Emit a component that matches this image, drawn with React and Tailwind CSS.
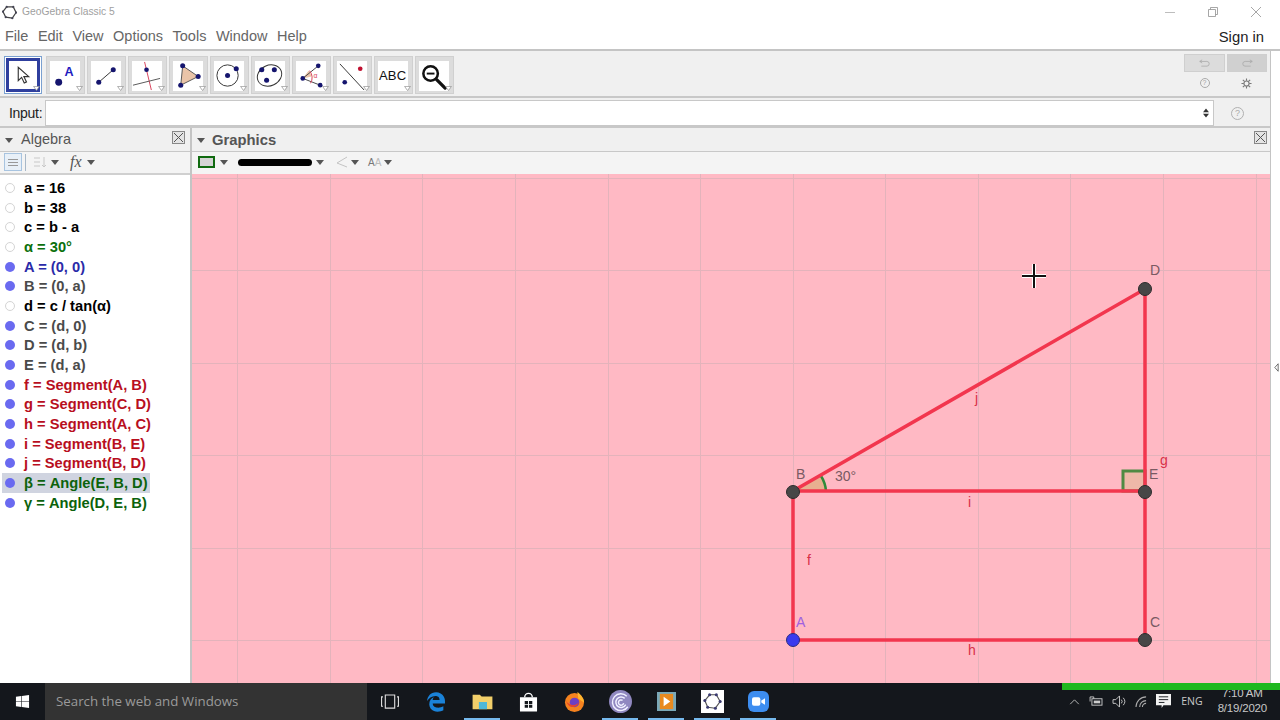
import { FaEdgeLegacy, FaWindows } from "react-icons/fa6";

const dot = "#15156e";

const tools = [
  <>
    <circle cx="9" cy="22" r="3.6" fill={dot} />
    <text x="15" y="15" fontSize="13" fontWeight="700" fill="#1c1cc0" fontFamily="Liberation Sans">A</text>
  </>,
  <>
    <line x1="8" y1="22" x2="23" y2="9" stroke="#333" strokeWidth="1" />
    <circle cx="8" cy="22" r="2.6" fill={dot} />
    <circle cx="23" cy="9" r="2.6" fill={dot} />
  </>,
  <>
    <line x1="13" y1="1" x2="20" y2="30" stroke="#d8405a" strokeWidth="1" />
    <line x1="1" y1="25" x2="29" y2="18" stroke="#555" strokeWidth="1" />
    <circle cx="15" cy="9" r="2.4" fill={dot} />
  </>,
  <>
    <polygon points="10,5 26,16 8,25" fill="#eac4a8" stroke="#555" strokeWidth="1" />
    <circle cx="10" cy="5" r="2.6" fill={dot} />
    <circle cx="26" cy="16" r="2.6" fill={dot} />
    <circle cx="8" cy="25" r="2.6" fill={dot} />
  </>,
  <>
    <circle cx="14" cy="15" r="11" fill="none" stroke="#333" strokeWidth="1" />
    <circle cx="14" cy="15" r="2.6" fill={dot} />
    <circle cx="23" cy="8" r="2.6" fill={dot} />
  </>,
  <>
    <ellipse cx="15" cy="15" rx="13" ry="10.5" fill="none" stroke="#333" strokeWidth="1" transform="rotate(-25 15 15)" />
    <circle cx="7" cy="9" r="2.6" fill={dot} />
    <circle cx="20" cy="9" r="2.6" fill={dot} />
    <circle cx="12" cy="20" r="2.6" fill={dot} />
  </>,
  <>
    <path d="M7 18 L16 16 A9 9 0 0 0 13 10 Z" fill="#eac4a8" />
    <path d="M23 5 L7 18 L25 25" fill="none" stroke="#444" strokeWidth="1" />
    <path d="M14 10 A11 11 0 0 1 15 23" fill="none" stroke="#d8405a" strokeWidth="1" />
    <circle cx="23" cy="5" r="2.4" fill={dot} />
    <circle cx="7" cy="18" r="2.4" fill={dot} />
    <circle cx="25" cy="25" r="2.4" fill={dot} />
    <text x="18" y="18" fontSize="7" fill="#d8405a" fontFamily="Liberation Sans">α</text>
  </>,
  <>
    <line x1="3" y1="3" x2="28" y2="30" stroke="#333" strokeWidth="1" />
    <circle cx="8" cy="22" r="2.4" fill={dot} />
    <circle cx="24" cy="8" r="2.4" fill="#c01030" />
  </>,
  <text x="1" y="20" fontSize="13.5" fill="#111" fontFamily="Liberation Sans" textLength="28">ABC</text>,
  <>
    <circle cx="12" cy="13" r="7.5" fill="none" stroke="#111" strokeWidth="2.6" />
    <line x1="8" y1="13" x2="16" y2="13" stroke="#111" strokeWidth="2" />
    <line x1="18" y1="19" x2="27" y2="28" stroke="#111" strokeWidth="3.4" strokeLinecap="round" />
  </>,
];

const rows = [
  ["a = 16", "text-black", false],
  ["b = 38", "text-black", false],
  ["c = b - a", "text-black", false],
  ["α = 30°", "text-[#0c700c]", false],
  ["A = (0, 0)", "text-[#2a2aa8]", true],
  ["B = (0, a)", "text-[#4a4a4a]", true],
  ["d = c / tan(α)", "text-black", false],
  ["C = (d, 0)", "text-[#4a4a4a]", true],
  ["D = (d, b)", "text-[#4a4a4a]", true],
  ["E = (d, a)", "text-[#4a4a4a]", true],
  ["f = Segment(A, B)", "text-[#b80f1e]", true],
  ["g = Segment(C, D)", "text-[#b80f1e]", true],
  ["h = Segment(A, C)", "text-[#b80f1e]", true],
  ["i = Segment(B, E)", "text-[#b80f1e]", true],
  ["j = Segment(B, D)", "text-[#b80f1e]", true],
  ["β = Angle(E, B, D)", "text-[#0c620c]", true],
  ["γ = Angle(D, E, B)", "text-[#0c620c]", true],
];

const Caret = ({ className = "" }) => (
  <span className={`w-0 h-0 border-x-[4px] border-x-transparent border-t-[5px] border-t-[#555] ${className}`} />
);

const CloseBox = () => (
  <div className="w-[13px] h-[13px] mb-[6px] border border-[#888] bg-[#e4e4e4]">
    <svg viewBox="0 0 11 11" className="w-full h-full">
      <path d="M1 1 L10 10 M10 1 L1 10" stroke="#555" strokeWidth="1" />
    </svg>
  </div>
);

const ToolButton = ({ children, first }) => (
  <div
    className={
      first
        ? "relative w-[38px] h-[38px] flex items-center justify-center border border-[#7aa0d0] bg-white mr-[2px]"
        : "relative w-[39px] h-[38px] pt-[4px] pl-[3px] bg-[#dcdcdc] border border-[#d0d0d0]"
    }
  >
    {first ? (
      <div className="w-[34px] h-[34px] border-[3px] border-[#2f3f9e] flex items-center justify-center">
        {children}
      </div>
    ) : (
      <svg viewBox="0 0 31 31" className="w-[30px] h-[30px] bg-white">
        {children}
      </svg>
    )}
    <svg viewBox="0 0 8 6" className="absolute right-[1px] bottom-[2px] w-[7px] h-[5px]">
      <path d="M0.5 0.5 H7.5 L4 5.5 Z" fill="#fff" stroke="#888" strokeWidth="0.8" />
    </svg>
  </div>
);

const Canvas = () => {
  const xs = [237, 330, 422, 515, 608, 700, 793, 885, 978, 1070, 1163, 1256];
  const ys = [178, 270, 363, 455, 548, 640];
  const label = { fontFamily: "Liberation Sans", fontSize: 14 };
  return (
    <svg viewBox="192 174 1078 509" className="w-full h-full block bg-[#ffb9c4]">
      <g shapeRendering="crispEdges">
        {xs.map((x) => (
          <line key={x} x1={x + 0.5} y1="174" x2={x + 0.5} y2="683" stroke="#e3b3bb" strokeWidth="1" />
        ))}
        {ys.map((y) => (
          <line key={y} x1="192" y1={y + 0.5} x2="1270" y2={y + 0.5} stroke="#e3b3bb" strokeWidth="1" />
        ))}
      </g>

      <path d="M793 491 L826 491 A33 33 0 0 0 821 476 Z" fill="#e8b090" />
      <path d="M826 491 A33 33 0 0 0 821 476" fill="none" stroke="#2e8b3a" strokeWidth="2.5" />
      <rect x="1123" y="471" width="22" height="20" fill="#eeb8a8" stroke="#4f8a42" strokeWidth="3" />

      <g stroke="#f2364e" strokeWidth="3.5" strokeLinecap="round">
        <line x1="793" y1="491" x2="793" y2="640" />
        <line x1="793" y1="640" x2="1145" y2="640" />
        <line x1="1145" y1="289" x2="1145" y2="640" />
        <line x1="793" y1="491" x2="1145" y2="491" />
        <line x1="793" y1="491" x2="1145" y2="289" />
      </g>

      <g fill="#474747" stroke="#2c2c2c" strokeWidth="1">
        <circle cx="793" cy="492" r="6.5" />
        <circle cx="1145" cy="492" r="6.5" />
        <circle cx="1145" cy="289" r="6.5" />
        <circle cx="1145" cy="640" r="6.5" />
      </g>
      <circle cx="793" cy="640" r="6.5" fill="#3a3aee" stroke="#2c2c80" strokeWidth="1" />

      <g {...label} fill="#7a5a62">
        <text x="796" y="479">B</text>
        <text x="1150" y="275">D</text>
        <text x="1149" y="479">E</text>
        <text x="1150" y="627">C</text>
        <text x="835" y="481">30°</text>
      </g>
      <text {...label} x="796" y="627" fill="#a060e0">A</text>
      <g {...label} fill="#d83048">
        <text x="1160" y="465">g</text>
        <text x="807" y="565">f</text>
        <text x="968" y="655">h</text>
        <text x="968" y="507">i</text>
        <text x="975" y="403">j</text>
      </g>

      <g>
        <path d="M1034 264 V288 M1022 276 H1046" stroke="#fff" strokeWidth="4" />
        <path d="M1034 264 V288 M1022 276 H1046" stroke="#111" strokeWidth="2" />
      </g>
    </svg>
  );
};

const TaskIcon = ({ children, active }) => (
  <div className="relative w-[46px] h-full flex items-center justify-center">
    {children}
    {active && <span className="absolute bottom-0 left-[5px] right-[5px] h-[2px] bg-[#76b9ed]" />}
  </div>
);

export default function App() {
  return (
    <div className="w-[1280px] h-[720px] overflow-hidden flex flex-col bg-white font-['Liberation_Sans',sans-serif]">
      {/* title bar */}
      <div className="h-[24px] flex items-center bg-white shrink-0">
        <svg viewBox="0 0 16 16" className="w-[15px] h-[15px] ml-[2px]">
          <polygon points="5,2 12,2 15,8 11,14 4,13 1,7" fill="none" stroke="#444" strokeWidth="1.3" />
          <g fill="#445">
            <circle cx="5" cy="2" r="1.2" />
            <circle cx="12" cy="2" r="1.2" />
            <circle cx="15" cy="8" r="1.2" />
            <circle cx="11" cy="14" r="1.2" />
            <circle cx="4" cy="13" r="1.2" />
            <circle cx="1" cy="7" r="1.2" />
          </g>
        </svg>
        <span className="ml-[5px] text-[10.3px] text-[#a0a0a0]">GeoGebra Classic 5</span>
        <div className="ml-auto flex items-center">
          <span className="w-[10px] h-px bg-[#bdbdbd] mr-[33px]" />
          <svg viewBox="0 0 10 10" className="w-[10px] h-[10px] mr-[33px]">
            <path d="M0.5 2.5 H7.5 V9.5 H0.5 Z M2.5 2.5 V0.5 H9.5 V7.5 H7.5" fill="none" stroke="#909090" strokeWidth="0.8" />
          </svg>
          <svg viewBox="0 0 10 10" className="w-[10px] h-[10px] mr-[19px]">
            <path d="M0 0 L10 10 M10 0 L0 10" stroke="#909090" strokeWidth="0.8" />
          </svg>
        </div>
      </div>

      {/* menu */}
      <div className="h-[27px] flex items-center justify-between bg-white border-b-2 border-[#c4c4c4] shrink-0 pl-[5px] pr-[16px] pt-[1px] text-[14.5px] text-[#666]">
        <div className="flex gap-[9.5px]">
          {["File", "Edit", "View", "Options", "Tools", "Window", "Help"].map((m) => (
            <span key={m}>{m}</span>
          ))}
        </div>
        <span className="text-[14.8px] text-[#222]">Sign in</span>
      </div>

      <div className="flex-1 flex min-h-0">
        <div className="w-[1271px] flex flex-col border-r border-[#c4c4c4]">
          {/* toolbar */}
          <div className="h-[47px] flex items-start gap-[2px] pl-[4px] pt-[5px] bg-[#f0f0f0] border-b-2 border-[#c8c8c8] shrink-0">
            <ToolButton first>
              <svg viewBox="0 0 20 24" className="w-[15px] h-[19px]">
                <path d="M3 1 V19 L7.5 14.5 L11 22 L14 20.5 L10.5 13.5 H17 Z" fill="#fff" stroke="#333" strokeWidth="1.5" />
              </svg>
            </ToolButton>
            {tools.map((t, i) => (
              <ToolButton key={i}>{t}</ToolButton>
            ))}
            <div className="ml-auto mr-[3px] mt-[-2px] flex flex-col items-center gap-[6px]">
              <div className="flex gap-[2px]">
                <div className="w-[41px] h-[18px] bg-[#dcdcdc] border border-[#cfcfcf] flex items-center justify-center">
                  <svg viewBox="0 0 14 10" className="w-[11px] h-[8px]">
                    <path d="M4 1 L1 3 L4 5 M1 3 H10 A3 3 0 0 1 10 9 H3" fill="none" stroke="#a8a8a8" />
                  </svg>
                </div>
                <div className="w-[40px] h-[18px] bg-[#d0d0d0] border border-[#cfcfcf] flex items-center justify-center">
                  <svg viewBox="0 0 14 10" className="w-[11px] h-[8px]">
                    <path d="M10 1 L13 3 L10 5 M13 3 H4 A3 3 0 0 0 4 9 H11" fill="none" stroke="#a8a8a8" />
                  </svg>
                </div>
              </div>
              <div className="w-full flex justify-around text-[#a0a0a0]">
                <span className="w-[10px] h-[10px] rounded-full border border-[#aaa] text-[7px] leading-[8px] text-center">?</span>
                <svg viewBox="0 0 12 12" className="w-[11px] h-[11px]">
                  <circle cx="6" cy="6" r="2.8" fill="none" stroke="#777" strokeWidth="1.2" />
                  <path d="M6 0.5 V3 M6 9 V11.5 M0.5 6 H3 M9 6 H11.5 M2 2 L3.8 3.8 M8.2 8.2 L10 10 M10 2 L8.2 3.8 M3.8 8.2 L2 10" stroke="#777" strokeWidth="1.2" />
                </svg>
              </div>
            </div>
          </div>

          {/* input */}
          <div className="h-[30px] flex items-center bg-[#f0f0f0] border-b-2 border-[#c8c8c8] shrink-0 pl-[9px] pt-[2px]">
            <span className="text-[14px] text-[#222] w-[36px] tracking-[-0.3px]">Input:</span>
            <div className="w-[1169px] h-[26px] bg-white border border-[#c8c8c8] flex items-center justify-end pr-[4px]">
              <svg viewBox="0 0 8 12" className="w-[6px] h-[10px]">
                <path d="M4 0 L8 5 H0 Z M4 12 L0 7 H8 Z" fill="#333" />
              </svg>
            </div>
            <span className="ml-[17px] w-[13px] h-[13px] rounded-full border border-[#b0b0b0] text-[9px] leading-[11px] text-center text-[#aaa]">?</span>
          </div>

          <div className="flex-1 flex min-h-0">
            {/* algebra */}
            <div className="w-[190px] flex flex-col border-r-2 border-[#c4c4c4] bg-white shrink-0 box-content">
              <div className="h-[24px] flex items-center pl-[5px] pr-[5px] pt-[1px] bg-[#f0f0f0] border-b border-[#c8c8c8]">
                <Caret className="mr-[8px]" />
                <span className="text-[14.5px] text-[#555]">Algebra</span>
                <div className="ml-auto">
                  <CloseBox />
                </div>
              </div>
              <div className="h-[23px] flex items-center pl-[4px] pb-[1px] bg-[#f4f4f4] border-b-2 border-[#d0d0d0]">
                <div className="w-[18px] h-[18px] bg-[#e8f0f8] border border-[#a8c4e0] flex flex-col justify-center gap-[2px] px-[3px]">
                  <span className="h-px bg-[#999]" />
                  <span className="h-px bg-[#999]" />
                  <span className="h-px bg-[#999]" />
                </div>
                <span className="w-px h-[17px] bg-[#a8b8c8] ml-[3px]" />
                <svg viewBox="0 0 14 14" className="w-[14px] h-[14px] ml-[7px]">
                  <path d="M1 3 H7 M1 7 H7 M1 11 H7 M11 2 V12 M9 10 L11 12 L13 10" fill="none" stroke="#c8c8c8" />
                </svg>
                <Caret className="ml-[4px]" />
                <span className="ml-[11px] font-['Liberation_Serif',serif] italic text-[16px] leading-none text-[#555]">fx</span>
                <Caret className="ml-[5px]" />
              </div>
              <div className="flex-1 pt-[3px] pl-[2px] pr-[40px]">
                {rows.map(([text, color, on]) => (
                  <div
                    key={text}
                    className={`h-[19.7px] flex items-center pl-[3px] text-[14.7px] font-bold whitespace-nowrap ${
                      text.startsWith("β") ? "bg-[#d0d4e0] w-[148px]" : ""
                    } ${color}`}
                  >
                    <span
                      className={`w-[10px] h-[10px] rounded-full mr-[9px] shrink-0 ${
                        on ? "bg-[#6a6af0]" : "bg-white border border-[#d4d4d4]"
                      }`}
                    />
                    {text}
                  </div>
                ))}
              </div>
            </div>

            {/* graphics */}
            <div className="flex-1 flex flex-col min-w-0">
              <div className="h-[24px] flex items-center pl-[5px] pr-[3px] pt-[1px] bg-[#f0f0f0] border-b border-[#c8c8c8] shrink-0">
                <Caret className="mr-[7px]" />
                <span className="text-[14.8px] font-bold text-[#555]">Graphics</span>
                <div className="ml-auto">
                  <CloseBox />
                </div>
              </div>
              <div className="h-[22px] flex items-center pl-[6px] pb-[2px] bg-[#f4f4f4] shrink-0">
                <span className="w-[17px] h-[12px] border-[2px] border-[#106a10] bg-[#d4d4d4]" />
                <Caret className="ml-[5px]" />
                <span className="w-[74px] h-[7px] rounded-full bg-black ml-[10px]" />
                <Caret className="ml-[4px]" />
                <svg viewBox="0 0 14 12" className="w-[14px] h-[12px] ml-[11px]">
                  <path d="M12 1 L2 7 L12 11" fill="none" stroke="#c4c4c4" />
                </svg>
                <Caret className="ml-[2px]" />
                <span className="ml-[9px] text-[10px] text-[#777]">A<span className="text-[#bbb]">A</span></span>
                <Caret className="ml-[3px]" />
              </div>
              <div className="flex-1 min-h-0">
                <Canvas />
              </div>
            </div>
          </div>
        </div>

        <div className="flex-1 flex items-center justify-center pl-[1px]">
          <svg viewBox="0 0 6 10" className="w-[5px] h-[9px]">
            <path d="M5 0.5 L1 5 L5 9.5 Z" fill="none" stroke="#555" />
          </svg>
        </div>
      </div>

      {/* taskbar */}
      <div className="relative h-[37px] flex items-center bg-[#14171c] shrink-0">
        <div className="w-[45px] h-full flex items-center justify-center">
          <FaWindows className="text-white text-[15px]" />
        </div>
        <div className="w-[322px] h-full bg-[#333333] flex items-center pl-[11px] text-[13.3px] text-[#9a9a9a] font-['Open_Sans',sans-serif]">
          Search the web and Windows
        </div>
        <TaskIcon>
          <svg viewBox="0 0 20 16" className="w-[20px] h-[15px]">
            <path d="M5 1 H15 V15 H5 Z M2.5 3 H1 V13 H2.5 M17.5 3 H19 V13 H17.5" fill="none" stroke="#ddd" strokeWidth="1.2" />
          </svg>
        </TaskIcon>
        <TaskIcon>
          <FaEdgeLegacy className="text-[#1a82d8] text-[20px]" />
        </TaskIcon>
        <TaskIcon active>
          <svg viewBox="0 0 22 20" className="w-[21px] h-[18px]">
            <path d="M0 2 H8 L10 4 H22 V18 H0 Z" fill="#f2cf6a" />
            <rect x="7" y="10" width="9" height="8" fill="#4fb8d8" />
          </svg>
        </TaskIcon>
        <TaskIcon>
          <svg viewBox="0 0 20 22" className="w-[19px] h-[22px]">
            <path d="M6 6 A4 4 0 0 1 14 6" fill="none" stroke="#fff" strokeWidth="1.4" />
            <path d="M1 6 H19 V21 H1 Z" fill="#fff" />
            <path d="M6 10 H9.5 V13 H6 Z M10.5 10 H14 V13 H10.5 Z M6 14 H9.5 V17 H6 Z M10.5 14 H14 V17 H10.5 Z" fill="#14171c" />
          </svg>
        </TaskIcon>
        <TaskIcon>
          <svg viewBox="0 0 22 22" className="w-[21px] h-[21px]">
            <circle cx="11" cy="12" r="10" fill="#f5821f" />
            <path d="M14 1 C18 4 21 8 21 12 L15 8 Z" fill="#ffb52e" />
            <circle cx="11" cy="12" r="5" fill="#6d3fc4" />
            <path d="M2 10 C5 16 14 16 16 11 C14 18 5 20 2 10 Z" fill="#e8452a" />
          </svg>
        </TaskIcon>
        <TaskIcon active>
          <svg viewBox="0 0 22 22" className="w-[23px] h-[23px]">
            <circle cx="11" cy="11" r="11" fill="#9088c0" />
            <path d="M17 6 A8 8 0 1 0 18 16 M15 8 A5 5 0 1 0 16 14 M13 10 A2.5 2.5 0 1 0 14 12.5" fill="none" stroke="#f0f0ff" strokeWidth="1.4" />
          </svg>
        </TaskIcon>
        <TaskIcon active>
          <svg viewBox="0 0 20 22" className="w-[19px] h-[21px]">
            <rect x="0" y="1" width="20" height="20" fill="#7aa8b8" />
            <rect x="3" y="3" width="14" height="16" fill="#e88a20" />
            <path d="M7 6 L14 11 L7 16 Z" fill="#fff" />
          </svg>
        </TaskIcon>
        <TaskIcon active>
          <svg viewBox="0 0 24 24" className="w-[23px] h-[23px]">
            <rect width="24" height="24" fill="#fff" />
            <polygon points="9,5 16,5 20,12 15,19 7,18 4,11" fill="none" stroke="#555" strokeWidth="1.2" />
            <g fill="#3a3a70">
              <circle cx="9" cy="5" r="1.6" />
              <circle cx="16" cy="5" r="1.6" />
              <circle cx="20" cy="12" r="1.6" />
              <circle cx="15" cy="19" r="1.6" />
              <circle cx="7" cy="18" r="1.6" />
              <circle cx="4" cy="11" r="1.6" />
            </g>
          </svg>
        </TaskIcon>
        <TaskIcon active>
          <div className="w-[21px] h-[21px] rounded-[6px] bg-[#3d8df0] flex items-center justify-center">
            <svg viewBox="0 0 14 9" className="w-[13px] h-[9px]">
              <rect width="9" height="9" rx="2" fill="#fff" />
              <path d="M10 3.5 L14 1 V8 L10 5.5 Z" fill="#fff" />
            </svg>
          </div>
        </TaskIcon>

        {/* tray */}
        <div className="ml-auto h-full flex items-center text-[#c8c8c8] pr-[13px]">
          <svg viewBox="0 0 12 7" className="w-[11px] h-[6px] mr-[9px]">
            <path d="M1 6 L6 1 L11 6" fill="none" stroke="#ccc" />
          </svg>
          <svg viewBox="0 0 16 12" className="w-[15px] h-[11px] mr-[8px]">
            <rect x="3" y="3" width="11" height="7" fill="none" stroke="#ccc" />
            <rect x="5" y="5" width="7" height="3" fill="#ccc" />
            <path d="M1 1 H5 V3 M1 1 V6" stroke="#ccc" fill="none" />
          </svg>
          <svg viewBox="0 0 16 14" className="w-[15px] h-[13px] mr-[8px]">
            <path d="M1 5 H4 L8 1 V13 L4 9 H1 Z M10 5 A3 3 0 0 1 10 9 M12 3 A6 6 0 0 1 12 11" fill="none" stroke="#ccc" />
          </svg>
          <svg viewBox="0 0 14 12" className="w-[13px] h-[11px] mr-[8px]">
            <path d="M1 12 A11 11 0 0 1 12 1 M5 12 A7 7 0 0 1 12 5 M8 12 A4 4 0 0 1 12 8" fill="none" stroke="#aaa" strokeWidth="1.2" />
          </svg>
          <svg viewBox="0 0 16 16" className="w-[15px] h-[15px] mr-[10px]">
            <path d="M0 0 H16 V12 H8 L6 15 V12 H0 Z" fill="#f2f2f2" />
            <path d="M3 3 H13 M3 6 H13 M3 9 H9" stroke="#14171c" />
          </svg>
          <span className="text-[10.5px] mr-[15px] font-['Open_Sans',sans-serif]">ENG</span>
          <div className="flex flex-col items-center text-[11.5px] tracking-[-0.2px] leading-[15.5px] mt-[-1px]">
            <span>7:10 AM</span>
            <span>8/19/2020</span>
          </div>
        </div>

        {/* green recording strip lying over the tray */}
        <div className="absolute left-[1062px] right-0 top-0 h-[7px] bg-[#1fb81f]" />
      </div>
    </div>
  );
}
